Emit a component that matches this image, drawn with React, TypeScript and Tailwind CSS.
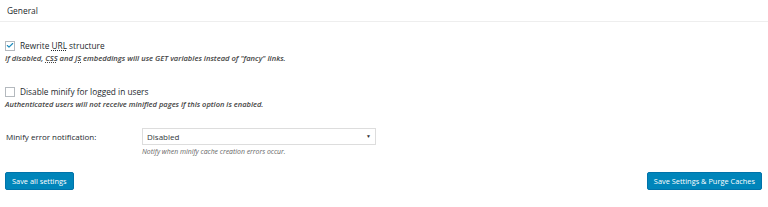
import { Check } from "lucide-react";

export default function App() {
  return (
    <div className="w-[768px] h-[207px] bg-white text-[#23282d] font-['Open_Sans',sans-serif] overflow-hidden">
      <div className="border-b border-[#eeeeee] pl-[7px] pt-[5px] h-[22px] text-[8.4px] leading-[12px]">General</div>

      <div className="pl-[5px] pt-[18px]">
        <div className="flex items-center gap-[5px] h-[11px]">
          <span className="w-[10px] h-[10px] border border-[#b4b9be] bg-white flex items-center justify-center">
            <Check className="w-[9px] h-[9px] text-[#1e8cbe]" strokeWidth={3.5} />
          </span>
          <span className="text-[8.3px] leading-[11px]">
            Rewrite <span className="underline decoration-dotted">URL</span> structure
          </span>
        </div>
        <div className="text-[7.6px] leading-[12px] italic font-semibold text-[#444] pt-[1px]">
          If disabled, <span className="underline decoration-dotted">CSS</span> and{" "}
          <span className="underline decoration-dotted">JS</span> embeddings will use GET variables instead of "fancy" links.
        </div>

        <div className="flex items-center gap-[5px] h-[11px] mt-[22px]">
          <span className="w-[10px] h-[10px] border border-[#b4b9be] bg-white" />
          <span className="text-[8.3px] leading-[11px]">Disable minify for logged in users</span>
        </div>
        <div className="text-[7.5px] leading-[12px] italic font-semibold text-[#444] pt-[1px]">
          Authenticated users will not receive minified pages if this option is enabled.
        </div>

        <div className="flex items-center mt-[18px] h-[17px]">
          <span className="w-[137px] pl-[1px] text-[8px] leading-[11px]">Minify error notification:</span>
          <div className="w-[234px] h-[17px] border border-[#dddddd] flex items-center justify-between px-[4px] text-[8px] text-[#32373c]">
            <span>Disabled</span>
            <span className="text-[5px] text-[#333]">▼</span>
          </div>
        </div>
        <div className="pl-[137px] text-[6.9px] leading-[12px] italic text-[#666] pt-[1px]">
          Notify when minify cache creation errors occur.
        </div>
      </div>

      <div className="flex justify-between px-[5px] mt-[14px] pr-[6px]">
        <button className="h-[18px] px-[6px] rounded-[2px] bg-[#0085ba] border border-[#0073aa] text-white text-[7.4px] leading-[16px]">
          Save all settings
        </button>
        <button className="h-[18px] px-[6px] rounded-[2px] bg-[#0085ba] border border-[#0073aa] text-white text-[7.4px] leading-[16px]">
          Save Settings &amp; Purge Caches
        </button>
      </div>
    </div>
  );
}
